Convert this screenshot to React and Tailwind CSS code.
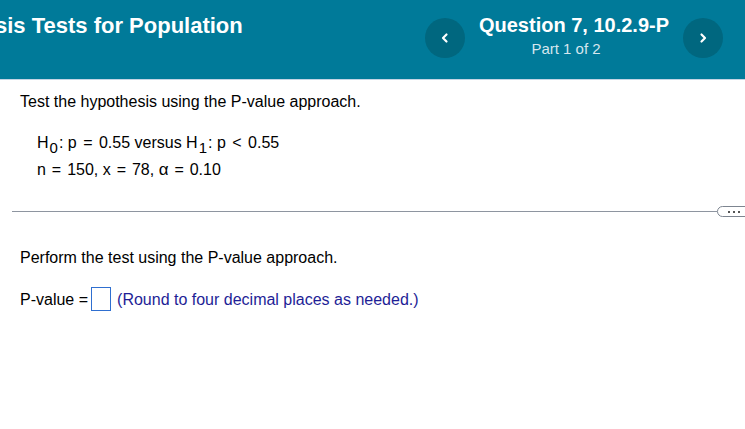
import React from 'react';

const font = { fontFamily: '"Liberation Sans", Arial, sans-serif' };

// Round nav button in the header
const NavButton = ({ dir }) => (
  <button className="flex h-10 w-10 shrink-0 items-center justify-center rounded-full bg-[#00677f] text-white">
    <svg width="10" height="12" viewBox="0 0 10 12" fill="none">
      {dir === 'prev' ? (
        <path d="M6.5 2.5 3 6l3.5 3.5" stroke="white" strokeWidth="2.2" strokeLinecap="round" strokeLinejoin="round" />
      ) : (
        <path d="M3.5 2.5 7 6 3.5 9.5" stroke="white" strokeWidth="2.2" strokeLinecap="round" strokeLinejoin="round" />
      )}
    </svg>
  </button>
);

// math operator with a bit of extra room, like the rendered math in the reference
const Op = ({ children }) => <span className="mx-[2px]">{` ${children} `}</span>;
const OpTight = ({ children }) => <span className="mx-[1.5px]">{` ${children} `}</span>;
const Sub = ({ children }) => <span className="relative top-[5px] mx-[1px] text-[15px]">{children}</span>;

export default function App() {
  return (
    <div className="h-[429px] w-[745px] overflow-hidden bg-white text-black" style={font}>
      {/* Header bar */}
      <div className="flex h-[79px] items-start overflow-hidden bg-[#007a99] text-white">
        <div className="-ml-[5px] flex-1 whitespace-nowrap pt-[13px] text-[22px] font-bold leading-[26px]">
          sis Tests for Population
        </div>
        <div className="mt-[18px]">
          <NavButton dir="prev" />
        </div>
        <div className="flex w-[218px] flex-col items-center pt-[13px]">
          <div className="whitespace-nowrap text-[20px] font-bold leading-[24px]">Question 7, 10.2.9-P</div>
          <div className="mt-[3px] pr-4 text-[15px] leading-[18px] text-[#d6e6ee]">Part 1 of 2</div>
        </div>
        <div className="mr-[22px] mt-[18px]">
          <NavButton dir="next" />
        </div>
      </div>
      <div className="h-px bg-[#c4d4e4]" />

      {/* Question prompt */}
      <div className="px-5 pt-[12px] text-[16px] leading-[19px]">
        <p>Test the hypothesis using the P-value approach.</p>
        <div className="mt-[18px] pl-[17px]">
          <p className="leading-[27px]">
            H<Sub>0</Sub>: p<Op>=</Op>0.55 versus H<Sub>1</Sub>: p<Op>&lt;</Op>0.55
          </p>
          <p className="leading-[27px]">
            n<OpTight>=</OpTight>150, x<OpTight>=</OpTight>78, <span className="text-[17px]">α</span>
            <OpTight>=</OpTight>0.10
          </p>
        </div>
      </div>

      {/* Divider with expander pill */}
      <div className="mt-[23px] flex items-center pl-3">
        <div className="h-px flex-1 bg-[#8e95a0]" />
        <div className="-mr-5 flex h-[11px] w-12 items-center justify-start gap-[3px] rounded-full border border-[#7d8590] bg-white pl-[10px]">
          <span className="h-[2px] w-[2px] bg-[#555]" />
          <span className="h-[2px] w-[2px] bg-[#555]" />
          <span className="h-[2px] w-[2px] bg-[#555]" />
        </div>
      </div>

      {/* Answer part */}
      <div className="px-5 pt-[31px] text-[16px] leading-[19px]">
        <p>Perform the test using the P-value approach.</p>
        <div className="mt-[20px] flex items-center">
          <span>P-value =</span>
          <span className="ml-[3px] inline-block h-[24px] w-[20px] border border-[#2f6fd0]" />
          <span className="ml-[6px] text-[#1e1e96]">(Round to four decimal places as needed.)</span>
        </div>
      </div>
    </div>
  );
}
